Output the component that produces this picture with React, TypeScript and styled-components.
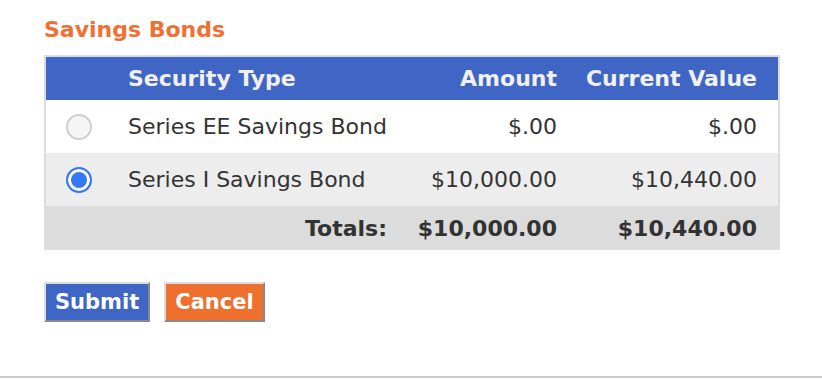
import React from "react";
import styled, { createGlobalStyle } from "styled-components";

const Global = createGlobalStyle`
  html, body { margin: 0; padding: 0; background: #fff; }
  body { font-family: "DejaVu Sans", Verdana, sans-serif; color: #333; }
`;

const Page = styled.div`
  height: 378px;
  padding: 17px 0 0 44px;
  box-sizing: border-box;
  border-bottom: 2px solid #cccccc;
`;

const Title = styled.h2`
  margin: 0 0 12px;
  font-size: 22px;
  line-height: 26px;
  font-weight: bold;
  color: #f07033;
`;

const Table = styled.div`
  width: 736px;
  box-sizing: border-box;
  border: 2px solid #dcdcdc;
  border-bottom: 0;
  display: grid;
  grid-template-columns: 66px 291px 170px 205px;
`;

const Row = styled.div<{ $bg: string; $h: number }>`
  display: contents;
  & > * {
    background: ${(p) => p.$bg};
    height: ${(p) => p.$h}px;
  }
`;

const Cell = styled.div<{ $align?: "left" | "right"; $bold?: boolean; $pr?: number; $span?: number; $color?: string }>`
  display: flex;
  align-items: center;
  justify-content: ${(p) => (p.$align === "right" ? "flex-end" : "flex-start")};
  padding: 0 ${(p) => p.$pr ?? 16}px 0 16px;
  font-size: 22px;
  font-weight: ${(p) => (p.$bold ? "bold" : "normal")};
  color: ${(p) => p.$color ?? "#333"};
  grid-column: span ${(p) => p.$span ?? 1};
  white-space: nowrap;
`;

const RadioCell = styled.div`
  display: flex;
  align-items: center;
  justify-content: center;
`;

const Radio = styled.span<{ $checked?: boolean }>`
  width: 26px;
  height: 26px;
  border-radius: 50%;
  box-sizing: border-box;
  ${(p) =>
    p.$checked
      ? `background: #3478f6; border: 2px solid #3478f6; box-shadow: inset 0 0 0 3px #fff;`
      : `background: #f5f5f5; border: 2px solid #cfcfcf;`}
`;

const Buttons = styled.div`
  display: flex;
  gap: 14px;
  margin-top: 32px;
`;

const Button = styled.button<{ $bg: string }>`
  height: 40px;
  padding: 0 9px;
  background: ${(p) => p.$bg};
  color: #fff;
  font-family: "DejaVu Sans", Verdana, sans-serif;
  font-size: 21px;
  font-weight: bold;
  border: 2px solid;
  border-color: #dddddd #888888 #888888 #dddddd;
  cursor: pointer;
`;

export default function App() {
  const header = "#3f66c4";
  return (
    <>
      <Global />
      <Page>
        <Title>Savings Bonds</Title>
        <Table>
          <Row $bg={header} $h={43}>
            <Cell />
            <Cell $bold $color="#f0f0f0">Security Type</Cell>
            <Cell $bold $align="right" $color="#f0f0f0">Amount</Cell>
            <Cell $bold $align="right" $pr={21} $color="#f0f0f0">Current Value</Cell>
          </Row>
          <Row $bg="#ffffff" $h={53}>
            <RadioCell><Radio /></RadioCell>
            <Cell>Series EE Savings Bond</Cell>
            <Cell $align="right">$.00</Cell>
            <Cell $align="right" $pr={21}>$.00</Cell>
          </Row>
          <Row $bg="#ededed" $h={53}>
            <RadioCell><Radio $checked /></RadioCell>
            <Cell>Series I Savings Bond</Cell>
            <Cell $align="right">$10,000.00</Cell>
            <Cell $align="right" $pr={21}>$10,440.00</Cell>
          </Row>
          <Row $bg="#dcdcdc" $h={44}>
            <Cell $span={2} $bold $align="right">Totals:</Cell>
            <Cell $bold $align="right">$10,000.00</Cell>
            <Cell $bold $align="right" $pr={21}>$10,440.00</Cell>
          </Row>
        </Table>
        <Buttons>
          <Button $bg="#3f66c4">Submit</Button>
          <Button $bg="#ef6f2e">Cancel</Button>
        </Buttons>
      </Page>
    </>
  );
}
